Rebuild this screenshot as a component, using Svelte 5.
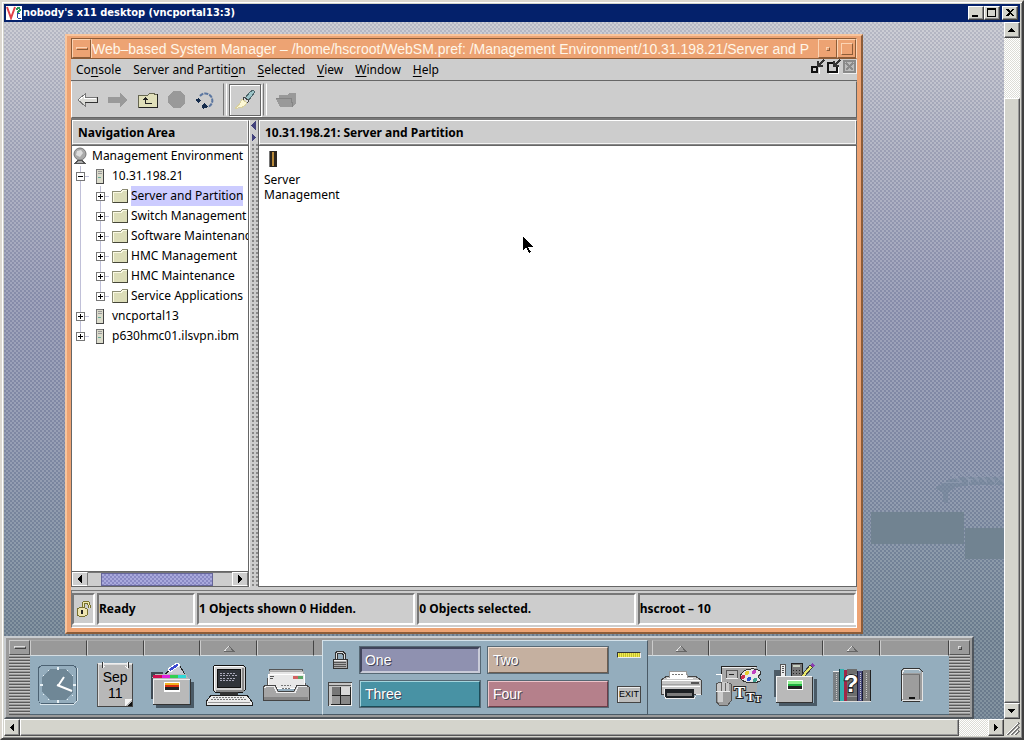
<script lang="ts">
  type TreeNode = {
    label: string;
    level: number;
    icon: "host" | "folder";
    open?: boolean;
    last?: boolean;
  };

  const menus = [
    { before: "Co", key: "n", after: "sole" },
    { before: "Server and Partiti", key: "o", after: "n" },
    { before: "", key: "S", after: "elected" },
    { before: "", key: "V", after: "iew" },
    { before: "", key: "W", after: "indow" },
    { before: "", key: "H", after: "elp" },
  ];

  const nodes: TreeNode[] = [
    { label: "10.31.198.21", level: 1, icon: "host", open: true },
    { label: "Server and Partition", level: 2, icon: "folder" },
    { label: "Switch Management", level: 2, icon: "folder" },
    { label: "Software Maintenance", level: 2, icon: "folder" },
    { label: "HMC Management", level: 2, icon: "folder" },
    { label: "HMC Maintenance", level: 2, icon: "folder" },
    { label: "Service Applications", level: 2, icon: "folder", last: true },
    { label: "vncportal13", level: 1, icon: "host" },
    { label: "p630hmc01.ilsvpn.ibm", level: 1, icon: "host", last: true },
  ];

  const leftApps = [
    { id: "clock", label: "Clock", drawer: false },
    { id: "calendar", label: "Calendar", drawer: false },
    { id: "files", label: "File Manager", drawer: false },
    { id: "terminal", label: "Terminal", drawer: true },
    { id: "mail", label: "Mail", drawer: false },
  ];

  const rightApps = [
    { id: "printer", label: "Printer", drawer: true },
    { id: "style", label: "Style Manager", drawer: false },
    { id: "apps", label: "Applications", drawer: false },
    { id: "help", label: "Help", drawer: true },
    { id: "trash", label: "Trash", drawer: false },
  ];

  const workspaces = ["One", "Two", "Three", "Four"];

  let selected = "Server and Partition";
  let workspace = "One";
</script>

{#snippet appIcon(id: string)}
  {#if id === "clock"}
    <svg width="42" height="42" viewBox="0 0 42 42">
      <rect x="1.5" y="1.5" width="38" height="38" rx="4" fill="#94adbd" stroke="#4c6273" />
      <path d="M3 40h34l3-3V4" fill="none" stroke="#dbe6ec" />
      <path d="M13 5h15l8 8v15l-8 8H13l-8-8V13z" fill="#6f8796" />
      <path d="M21 22L27 13M20 21L35 27" stroke="#fff" stroke-width="2" fill="none" shape-rendering="auto" />
      <g fill="#e8f0f4">
        <path d="M20 3h2v3h-2zM20 36h2v3h-2zM3 20h3v2H3zM36 20h3v2h-3z" />
        <path d="M11 6h1v1h-1zM30 6h1v1h-1zM6 11h1v1H6zM35 11h1v1h-1zM6 30h1v1H6zM35 31h1v1h-1zM11 35h1v1h-1zM30 35h1v1h-1z" />
      </g>
    </svg>
  {:else if id === "calendar"}
    <span class="calendar">
      <svg class="rings" width="34" height="8" viewBox="0 0 34 8"><path d="M4 0v6M30 0v6" stroke="#333" /><path d="M5 0v6l2-2M29 0v6l-2-2" stroke="#f4f4f4" fill="none" /></svg>
      <span>Sep</span>
      <span>11</span>
      <svg class="curl" width="7" height="7" viewBox="0 0 7 7"><path d="M0 7V0h7z" fill="#f4f4f4" /><path d="M2 7L7 2v5z" fill="#111" /></svg>
    </span>
  {:else if id === "files"}
    <svg width="44" height="46" viewBox="0 0 44 46">
      <path d="M1 10h12v27H1z" fill="#3f4a54" />
      <path d="M13 14L28 1l8 13z" fill="#c9ccd4" stroke="#222" />
      <path d="M18 7l9-6 3 2-10 7z" fill="#3b49cf" stroke="#fff" />
      <path d="M6 44h36V20" fill="none" stroke="#4a5a66" stroke-width="3" />
      <path d="M2 16L5 12h31l3 5v26H3V16z" fill="#b9b9b9" />
      <path d="M3 17.500h37M3.500 43V17" stroke="#eee" />
      <path d="M3 42.500h37V17" fill="none" stroke="#333" />
      <path d="M3 14.500h9" stroke="#d01050" stroke-width="3" /><path d="M12 14.500h8" stroke="#e020e0" stroke-width="3" />
      <path d="M20 14.500h8" stroke="#30d050" stroke-width="3" /><path d="M28 14.500h8" stroke="#30d8d8" stroke-width="3" />
      <rect x="14" y="20" width="16" height="10" fill="#fff" />
      <rect x="15" y="21" width="14" height="3" fill="#f0b020" /><rect x="15" y="23" width="14" height="2" fill="#d83010" /><rect x="15" y="25" width="14" height="3" fill="#222" />
    </svg>
  {:else if id === "terminal"}
    <svg width="48" height="42" viewBox="0 0 48 42">
      <path d="M8 3l2-2h28l2 2v23l-2 2H10l-2-2z" fill="#d4d4d4" stroke="#111" />
      <path d="M9 26V2h29" stroke="#fff" fill="none" />
      <path d="M38 4v23H11" stroke="#888" stroke-width="2" fill="none" />
      <rect x="12" y="5" width="23" height="18" fill="#30343a" stroke="#111" />
      <path d="M15 9h6m1 0h9M15 11h10m2 0h5M15 14h5m2 0h8M15 16h8m1 0h5" stroke="#aab" stroke-dasharray="2 1" />
      <path d="M15 28h18v3H15z" fill="#333" />
      <path d="M6 31h36l5 7v3H1v-3z" fill="#ececec" stroke="#222" />
      <path d="M8 33.500h31M6 35.500h35" stroke="#777" stroke-dasharray="2 1" /><path d="M3 38.500h42" stroke="#999" />
    </svg>
  {:else if id === "mail"}
    <svg width="48" height="34" viewBox="0 0 48 34">
      <path d="M5 15L8 1h32l3 14v5H5z" fill="#bbb" stroke="#555" />
      <path d="M7 3h34v16H7z" fill="#e6e6e6" stroke="#aaa" />
      <path d="M6 6h36v14H6z" fill="#e8e8e8" stroke="#fff" />
      <path d="M8 8.500h4M8 10.500h3" stroke="#555" /><path d="M31 8h5v3h-5z" fill="#d36262" /><path d="M36 8h5v3h-5z" fill="#5ba565" />
      <path d="M1 19l3-2h9l3 6h16l3-6h9l3 2v13H1z" fill="#a6a6a6" stroke="#444" />
      <path d="M2 19.500l3-1h7l3 6h18l3-6h9" fill="none" stroke="#eee" />
      <path d="M2 30h44" stroke="#858585" stroke-width="3" /><path d="M19 17.500h10M20 20.500h8" stroke="#777" stroke-dasharray="2 1" />
    </svg>
  {:else if id === "printer"}
    <svg width="42" height="30" viewBox="0 0 42 30">
      <path d="M1 10l6-4h28l6 4v14H1z" fill="#c6c6c6" stroke="#444" />
      <path d="M9 8V1h17l2 7z" fill="#fff" stroke="#999" /><path d="M12 4.500h12" stroke="#777" stroke-dasharray="2 1" />
      <path d="M7 8.500h26" stroke="#fff" />
      <path d="M2 10.500h38M2 16.500h38" stroke="#fff" /><path d="M2 14.500h38" stroke="#a4a4a4" /><path d="M31 13h8" stroke="#555" stroke-width="2" />
      <path d="M6 20h27v7H6z" fill="#7c7c7c" stroke="#1c2024" stroke-width="2" /><path d="M4 19v7l2 2.500h28l2-2.500" stroke="#eee" fill="none" />
      <path d="M7 22h25" stroke="#1c2024" stroke-width="2" /><path d="M36 24.500h5" stroke="#eee" />
    </svg>
  {:else if id === "style"}
    <svg class="style-art" width="48" height="42" viewBox="0 0 48 42">
      <path d="M7 2h36v26H7z" fill="#a9a9a9" /><path d="M7 28V2h36" stroke="#222" fill="none" /><path d="M8 3.500h34" stroke="#eee" />
      <rect x="12" y="6" width="11" height="8" fill="#b8b8b8" stroke="#555" /><path d="M15 10.500h5" stroke="#222" /><path d="M12 14.500h12" stroke="#eee" />
      <path d="M2 10.500h5v9" stroke="#fff" fill="none" />
      <path d="M26 13q2-9 14-8 8 1 7 5-4 2-2 4 2 1 1 3-5 3-14 1-6-2-6-5z" fill="#e8e8e8" stroke="#333" />
      <circle cx="29" cy="13" r="2" fill="#d03050" /><circle cx="33" cy="9" r="2" fill="#e8d030" /><circle cx="40" cy="8" r="2" fill="#c040c0" /><circle cx="35" cy="15" r="2" fill="#3050d0" /><circle cx="41" cy="16" r="2" fill="#40a090" />
      <path d="M2 20q7-4 15 0v17l-3 4H5l-3-4z" fill="#9d9d9d" stroke="#555" />
      <path d="M3 20q6-3 12-1v8H3z" fill="#c9c9c9" /><path d="M2 27.500h14" stroke="#eee" /><path d="M7.500 19v8M11.500 19v8" stroke="#666" /><path d="M4 28h5v10H4z" fill="#ccc" />
      <text x="20" y="34" font-size="17">T</text><text x="32" y="37" font-size="13">T</text><text x="41" y="38" font-size="9">T</text>
    </svg>
  {:else if id === "apps"}
    <svg width="44" height="46" viewBox="0 0 44 46">
      <path d="M1 8h10v27H1z" fill="#4d5c67" />
      <path d="M7 2h5v13H7z" fill="#eee" stroke="#555" /><path d="M9 4.500h2m-2 2h2m-2 2h2m-2 2h2" stroke="#555" />
      <rect x="18" y="1" width="11" height="14" fill="#777" stroke="#222" /><path d="M20 4h7" stroke="#c8d0c0" stroke-width="2" /><path d="M20 8.500h7M20 11.500h7" stroke="#222" stroke-dasharray="1 2" />
      <path d="M28 14L37 3l3 2-9 10z" fill="#e9e96a" stroke="#444" /><path d="M37 3l2-2 3 2-2 3z" fill="#8a3fb0" />
      <path d="M6 42h36V17" fill="none" stroke="#4a5a66" stroke-width="3" />
      <path d="M3 14h36v27H3z" fill="#b9b9b9" /><path d="M3 14.500h36M3.500 41V14" stroke="#f4f4f4" /><path d="M3 40.500h36V15" stroke="#333" fill="none" />
      <rect x="14" y="18" width="16" height="10" fill="#fff" /><rect x="15" y="19" width="14" height="3" fill="#90f090" /><rect x="15" y="22" width="14" height="2" fill="#20b040" /><rect x="15" y="24" width="14" height="3" fill="#222" />
    </svg>
  {:else if id === "help"}
    <svg class="help-art" width="38" height="34" viewBox="0 0 38 34">
      <rect x="0" y="3" width="6" height="30" fill="#7a8084" /><path d="M0 3.500h6" stroke="#eee" />
      <rect x="6" y="1" width="5" height="32" fill="#35b0b0" /><path d="M6.500 1v32" stroke="#163c40" />
      <rect x="11" y="2" width="3" height="31" fill="#a02848" />
      <rect x="14" y="1" width="10" height="32" fill="#6d6d6d" /><path d="M14 6.500h10M14 28.500h10" stroke="#999" />
      <rect x="24" y="3" width="5" height="30" fill="#4b4d80" /><path d="M24.500 3v30M29.500 3v30" stroke="#1a1a30" />
      <rect x="30" y="2" width="7" height="31" fill="#7c7c7c" /><path d="M37.500 2v31" stroke="#222" />
      <path d="M3.500 6v25M33.500 5v26M27.500 5v27" stroke="#ccc" stroke-dasharray="1 1" />
      <path d="M0 33.500h38" stroke="#ddd" />
      <text x="18" y="24" text-anchor="middle">?</text>
    </svg>
  {:else}
    <svg width="24" height="36" viewBox="0 0 24 36">
      <path d="M2 4l3-3h15l3 3v29l-2 1H4l-2-1z" fill="#9d9d9d" stroke="#333" />
      <path d="M3 6V4l2-2h15l2 2v2z" fill="#a0b4c0" /><path d="M3.500 32V5l2-2.500h14l2 2" fill="none" stroke="#eee" /><path d="M3 7.500h18" stroke="#777" />
      <path d="M3 33.500h20V5" stroke="#e4e4e4" fill="none" />
      <path d="M10 31h6" stroke="#111" stroke-width="2" /><path d="M20.500 8v24" stroke="#666" />
    </svg>
  {/if}
{/snippet}

{#snippet drawerRow(apps: typeof leftApps)}
  {#each apps as app}
    <div class="slot">
      <button class="drawer" aria-label="{app.label} drawer">
        {#if app.drawer}
          <svg width="12" height="7" viewBox="0 0 12 7"><path d="M1 6.500L6 1" stroke="#e4e4e4" fill="none" /><path d="M6 1l5 5.500H1" stroke="#666" fill="none" /></svg>
        {/if}
      </button>
      <button class="app" aria-label={app.label}>{@render appIcon(app.id)}</button>
    </div>
  {/each}
{/snippet}

<div class="vnc">
  <header class="vnc-title">
    <svg width="16" height="14" viewBox="0 0 16 14">
      <rect width="16" height="14" fill="#fff" />
      <path d="M1 1l4 11L9 1" stroke="#e04048" stroke-width="2" fill="none" shape-rendering="auto" />
      <path d="M10 3l3-1 1 2-3 3" stroke="#2b9a5a" stroke-width="2" fill="none" /><path d="M14 7h-3v4l1 1h3" stroke="#2848a8" stroke-width="1" fill="none" />
    </svg>
    <h1>nobody's x11 desktop (vncportal13:3)</h1>
    <button class="win-btn" aria-label="Minimize"><svg width="10" height="10"><path d="M1 7h6v2H1z" /></svg></button>
    <button class="win-btn" aria-label="Maximize"><svg width="10" height="10"><path d="M0 0h9v9H0zM1 2v6h7V2z" fill-rule="evenodd" /></svg></button>
    <button class="win-btn close" aria-label="Close"><svg width="10" height="10"><path d="M1 1h2l2 2 2-2h2L6 4.500 9 8H7L5 6 3 8H1l3-3.500z" /></svg></button>
  </header>

  <div class="view">
    <main class="desktop">
      <svg class="wallpaper" width="136" height="92" viewBox="0 0 136 92">
        <path d="M3 43h93v32H3zM97 59h39v31H97z" fill="#718391" />
        <path d="M67 19l13-8 14-3h42v8h-32l-16 2-8 6v10l-5-1v-9z" fill="#73859a" opacity=".6" />
        <path d="M84 4l10 10M91 2l12 11M100 2l11 10M108 3l11 10M116 3l11 10M124 3l12 10" stroke="#929db2" stroke-width="2" fill="none" opacity=".6" />
        <path d="M76 13h16M100 16v-6h5M112 16h6M126 16l5-5" stroke="#929db2" fill="none" opacity=".7" />
      </svg>

      <section class="window" aria-label="Web-based System Manager">
        <div class="titlebar">
          <button class="frame-btn" aria-label="Window menu"><span class="dash"></span></button>
          <h2>Web–based System Manager – /home/hscroot/WebSM.pref: /Management Environment/10.31.198.21/Server and P</h2>
          <button class="frame-btn" aria-label="Minimize window"><span class="dot"></span></button>
          <button class="frame-btn" aria-label="Maximize window"><span class="square"></span></button>
        </div>

        <div class="client">
          <nav class="menubar">
            {#each menus as menu}
              <button>{menu.before}<u>{menu.key}</u>{menu.after}</button>
            {/each}
            <div class="inner-controls">
              <button aria-label="Iconify"><svg width="15" height="15" viewBox="0 0 15 15"><path d="M2 8h5v5H2z" fill="none" stroke="#111" stroke-width="2" /><path d="M14 1L8 7M8 2v5h5" fill="none" stroke="#333" stroke-width="2" /><path d="M9 9v6H2" fill="none" stroke="#fff" /></svg></button>
              <button aria-label="Restore"><svg width="15" height="15" viewBox="0 0 15 15"><path d="M7 4H2v9h9V8" fill="none" stroke="#111" stroke-width="2" /><path d="M14 1L8 7M8 2v5h5" fill="none" stroke="#333" stroke-width="2" /><path d="M12.500 8v6.500H3" fill="none" stroke="#fff" /></svg></button>
              <button aria-label="Close view" disabled><svg width="15" height="15" viewBox="0 0 15 15"><path d="M2 2h11v11H2z" fill="#bbb" stroke="#8a8a8a" stroke-width="2" /><path d="M4 4l7 7M11 4l-7 7" stroke="#8a8a8a" stroke-width="2" /><path d="M14.500 1v13.500H1" fill="none" stroke="#eee" /></svg></button>
            </div>
          </nav>

          <div class="toolbar">
            <button aria-label="Back"><svg width="22" height="16" viewBox="0 0 22 16"><path d="M1 8l7-6v3h12v5H8v4z" fill="#dcdcd8" stroke="#777" /><path d="M8 10.500h12.500V5" stroke="#333" fill="none" /><path d="M2 8l5-4v2h12" stroke="#fff" fill="none" /></svg></button>
            <button aria-label="Forward" disabled><svg width="22" height="16" viewBox="0 0 22 16"><path d="M21 8l-8-7v4H1v6h12v4z" fill="#999" /></svg></button>
            <button aria-label="Up"><svg width="22" height="18" viewBox="0 0 22 18"><path d="M1.500 16.500v-12h9l2-2h5v1h3v13z" fill="#e0dfba" stroke="#666650" /><path d="M20.500 3v13.500h-19" stroke="#222" fill="none" /><path d="M8.500 12V7M10.500 9L8.500 7 6.500 9M8 12.500h7" stroke="#222" fill="none" /></svg></button>
            <button aria-label="Stop" disabled><svg width="20" height="20" viewBox="0 0 20 20"><path d="M6 1h7l5 5v7l-5 5H6l-5-5V6z" fill="#999" /></svg></button>
            <button aria-label="Reload"><svg width="20" height="20" viewBox="0 0 20 20"><path d="M5 6a7 7 0 1 1 8 11" stroke="#5b76a0" stroke-width="2" fill="none" stroke-dasharray="4 1" shape-rendering="auto" /><path d="M4 8l2 3-3 2-3-3zM9 13l4 4-5 2-1-3z" fill="#152c4c" /></svg></button>
            <span class="divider"></span>
            <button class="toggled" aria-label="Highlight" aria-pressed="true"><svg width="24" height="24" viewBox="0 0 24 24"><path d="M17 4l3-2 2 2-6 8-4-2z" fill="#9cc4c8" stroke="#4c656a" /><path d="M11 9l5 4-2 2-4-4z" fill="#ddd" stroke="#444" /><path d="M9 11l5 4q-4 6-12 5 5-3 7-9z" fill="#fdf8d6" stroke="#d8d0a0" /></svg></button>
            <span class="divider"></span>
            <button class="open-folder" aria-label="Open" disabled><svg width="22" height="18" viewBox="0 0 22 18"><path d="M4 4h8l2-2h6l1 1v9l-3 4H5L1 8h3z" fill="#999" /><path d="M1 7.500h15l2 8" stroke="#858585" fill="none" /></svg></button>
          </div>

          <div class="panes">
            <aside class="nav-pane">
              <h3>Navigation Area</h3>
              <div class="tree">
                <button class="row">
                  <svg width="20" height="20" viewBox="0 0 20 20"><g shape-rendering="auto"><circle cx="8" cy="8" r="6" fill="#aaa" stroke="#777" /><path d="M5 5l4-1 2 3-3 4-4-2z" fill="#ddd" /></g><path d="M3 17.500h10l-3-3H6z" fill="#aaa" stroke="#555" /></svg>
                  <span>Management Environment</span>
                </button>
                {#each nodes as node}
                  <div class="row">
                    {#if node.level === 2}
                      <svg class="guide" width="18" height="20"><path d="M8.500 0v20" stroke="#c0c0d8" /></svg>
                    {/if}
                    <button class="expander" aria-label="Toggle {node.label}" aria-expanded={!!node.open}>
                      <svg width={node.level === 1 ? 22 : 20} height="20" viewBox="{node.level === 1 ? 0 : -2} 0 {node.level === 1 ? 22 : 20} 20">
                        <path d={node.last ? "M8.500 0v10h8" : "M8.500 0v20M8.500 10.500h8"} stroke="#c0c0d8" fill="none" />
                        <rect x="4.500" y="6.500" width="8" height="8" fill="#fff" stroke="#777" />
                        <path d={node.open ? "M6 10.500h5" : "M6 10.500h5M8.500 8v5"} stroke="#000" />
                      </svg>
                    </button>
                    <button class="node" class:selected={selected === node.label} on:click={() => (selected = node.label)}>
                      {#if node.icon === "host"}
                        <svg width="18" height="20" viewBox="0 0 18 20"><path d="M2 3h7v14H2z" fill="#dcdccc" stroke="#777" /><path d="M9.500 3v14.500H2" stroke="#444" fill="none" /><path d="M4 5.500h4M4 7.500h4" stroke="#999" /><path d="M4 11.500h3" stroke="#6a9" /></svg>
                      {:else}
                        <svg width="21" height="20" viewBox="0 0 21 20"><path d="M2.500 16.500v-11h8l2-2h5v13z" fill="#dcddb8" stroke="#8c8c74" /><path d="M3.500 16V6.500H11l2-2h4" stroke="#fafae4" fill="none" /><path d="M17.500 4v12.500h-15" stroke="#444438" fill="none" /></svg>
                      {/if}
                      <span>{node.label}</span>
                    </button>
                  </div>
                {/each}
              </div>
              <div class="nav-scroll">
                <button aria-label="Scroll left"><svg width="6" height="8"><path d="M5 0v8L0 4z" /></svg></button>
                <div class="nav-track"><span class="nav-thumb"></span></div>
                <button aria-label="Scroll right"><svg width="6" height="8"><path d="M1 0v8l5-4z" /></svg></button>
              </div>
            </aside>

            <div class="splitter">
              <svg width="8" height="22" viewBox="0 0 8 22"><path d="M6 1v9L1 5.500zM2 13v9l4-4.500z" fill="#42427c" /></svg>
            </div>

            <section class="content-pane">
              <h3>10.31.198.21: Server and Partition</h3>
              <div class="objects">
                <button class="object">
                  <svg width="16" height="16" viewBox="0 0 16 16"><rect x="5" y="0" width="8" height="16" fill="#2c2620" /><path d="M9 1v14" stroke="#b98a3a" stroke-width="2" /><path d="M5.500 0v16" stroke="#777" /></svg>
                  <span>Server</span>
                  <span>Management</span>
                </button>
                <svg class="cursor" width="12" height="18" viewBox="0 0 12 18"><path d="M1 1v13l3-3 3 6 2-1-3-5h5z" /></svg>
              </div>
            </section>
          </div>

          <footer class="status">
            <div class="cell lock">
              <svg width="17" height="18" viewBox="0 0 17 18" shape-rendering="auto"><path d="M8 8V4q0-2 3-2t3 3v3" stroke="#77702e" stroke-width="3" fill="none" /><path d="M8 8V4q0-2 3-2t3 3v3" stroke="#f0e8a8" fill="none" /><path d="M2 9q5-3 10 0v6q-5 3-10 0z" fill="#eee4b0" stroke="#77702e" /><path d="M7 10v4" stroke="#222" stroke-width="2" /></svg>
            </div>
            <div class="cell ready">Ready</div>
            <div class="cell">1 Objects shown 0 Hidden.</div>
            <div class="cell">0 Objects selected.</div>
            <div class="cell">hscroot – 10</div>
          </footer>
        </div>
      </section>

      <section class="front-panel" aria-label="Front panel">
        <div class="handle"><button aria-label="Panel menu"><span class="dash"></span></button></div>
        <div class="apps left">{@render drawerRow(leftApps)}<span class="stub"></span></div>

        <div class="switch">
          <button aria-label="Lock display"><svg width="18" height="20" viewBox="0 0 18 20"><path d="M5 9V4l2-2h4l2 2v5" stroke="#333" stroke-width="3" fill="none" /><path d="M5 9V4l2-2h4l2 2v5" stroke="#ddd" fill="none" /><rect x="2" y="9" width="14" height="9" fill="#aaa" stroke="#333" /><path d="M3 10.500h12" stroke="#eee" /><path d="M3 12.500h12M3 14.500h12M3 16.500h12" stroke="#555" /></svg></button>
          <div class="workspaces">
            {#each workspaces as name}
              <button class={name.toLowerCase()} class:current={workspace === name} on:click={() => (workspace = name)}>{name}</button>
            {/each}
          </div>
          <span class="busy"></span>
          <button aria-label="Graphical workspace manager"><svg width="24" height="24" viewBox="0 0 24 24"><rect width="24" height="24" fill="#c4c4c4" /><path d="M0 24V.5h24" stroke="#444" fill="none" /><path d="M1 3.500h22" stroke="#555" /><rect x="4" y="5" width="8" height="8" fill="#777" /><rect x="12" y="5" width="10" height="8" fill="#d8d8d8" /><rect x="4" y="14" width="8" height="8" fill="#999" /><rect x="13" y="14" width="9" height="8" fill="#888" /><path d="M4 13.500h18M12.500 5v17M3 22.500h19.500V5" stroke="#222" fill="none" /><path d="M1 23.500h22.500V1" stroke="#eee" fill="none" /></svg></button>
          <button class="exit">EXIT</button>
        </div>

        <div class="apps right"><span class="gap"></span>{@render drawerRow(rightApps)}</div>
        <div class="handle"><button aria-label="Minimize panel"><span class="dot"></span></button></div>
      </section>
    </main>

    <div class="vscroll">
      <button aria-label="Scroll up"><svg width="8" height="4"><path d="M0 4h7L3.500 0z" /></svg></button>
      <div class="track"><span class="thumb"></span></div>
      <button aria-label="Scroll down"><svg width="8" height="4"><path d="M0 0h7L3.500 4z" /></svg></button>
    </div>
    <div class="hscroll">
      <button aria-label="Scroll left"><svg width="4" height="8"><path d="M4 0v7L0 3.500z" /></svg></button>
      <div class="track"><span class="thumb"></span></div>
      <button aria-label="Scroll right"><svg width="4" height="8"><path d="M0 0v7l4-3.500z" /></svg></button>
    </div>
    <div class="grip"><svg width="14" height="14"><path d="M13 1L1 13M13 5L5 13M13 9L9 13" stroke="#777" stroke-width="2" /><path d="M12 1L0 13M12 5L4 13M12 9L8 13" stroke="#fff" /></svg></div>
  </div>
</div>

<style>
  :global(body) {
    margin: 0;
    background: #d4d4cc;
  }

  * {
    box-sizing: border-box;
  }

  svg {
    display: block;
    flex: none;
    shape-rendering: crispEdges;
  }

  button {
    margin: 0;
    padding: 0;
    border: 0;
    border-radius: 0;
    background: none;
    color: inherit;
    font: inherit;
  }

  h1,
  h2,
  h3 {
    margin: 0;
    white-space: nowrap;
  }

  .vnc {
    display: flex;
    flex-direction: column;
    height: 100vh;
    min-height: 480px;
    padding: 2px;
    border: 2px solid;
    border-color: #dcd8d0 #404040 #404040 #dcd8d0;
    background: #d4d4cc;
    box-shadow: inset 1px 1px 0 #fff, inset -1px -1px 0 #888;
    font-family: "Noto Sans", sans-serif;
    font-size: 12px;
    color: #000;
  }

  .vnc-title {
    display: flex;
    align-items: center;
    height: 18px;
    padding: 0 2px;
    background: #04216b;
    color: #fff;
  }

  .vnc-title h1 {
    flex: 1;
    padding-left: 1px;
    font-family: "DejaVu Sans Condensed", "DejaVu Sans", sans-serif;
    font-size: 11px;
    line-height: 18px;
  }

  .win-btn,
  .vscroll button,
  .hscroll button {
    display: grid;
    place-items: center;
    border: 1px solid;
    border-color: #fff #404040 #404040 #fff;
    background: #d4d4cc;
    box-shadow: inset -1px -1px 0 #888;
  }

  .win-btn {
    width: 16px;
    height: 14px;
  }

  .win-btn.close {
    margin-left: 2px;
  }

  .view {
    display: grid;
    flex: 1;
    grid-template-columns: minmax(0, 1fr) 16px;
    grid-template-rows: minmax(0, 1fr) 17px;
    min-height: 0;
  }

  .desktop {
    position: relative;
    display: flex;
    flex-direction: column;
    padding-top: 12px;
    overflow: hidden;
    background:
      repeating-conic-gradient(rgb(255 255 255 / 0.14) 0 25%, rgb(70 80 120 / 0.12) 0 50%) 0 0 / 4px 4px,
      linear-gradient(#c6c7cf 0, #a8abbd 18%, #8f94b0 40%, #868fa9 60%, #7a8a9d 76%, #6f8190 88%, #6f8190 100%);
  }

  .wallpaper {
    position: absolute;
    right: 0;
    bottom: 158px;
  }

  .window {
    position: relative;
    display: flex;
    flex: 1;
    flex-direction: column;
    min-height: 0;
    margin: 0 141px 2px 61px;
    padding: 2px 4px 4px;
    border: 2px solid;
    border-color: #f8c49c #8c5c38 #8c5c38 #f8c49c;
    background: #eda373;
  }

  .titlebar {
    display: flex;
    height: 21px;
    border: 1px solid;
    border-color: #8c5c38 #fcd4b4 #8c5c38 #8c5c38;
    color: #fff6e8;
  }

  .titlebar h2 {
    flex: 1;
    min-width: 0;
    overflow: hidden;
    border-left: 1px solid #fcd4b4;
    font-family: "Liberation Sans", sans-serif;
    font-size: 14px;
    font-weight: 400;
    line-height: 20px;
  }

  .frame-btn {
    display: grid;
    place-items: center;
    width: 19px;
    border: 1px solid;
    border-color: #fcd4b4 #8c5c38 #8c5c38 #fcd4b4;
  }

  .dash {
    width: 12px;
    height: 3px;
    border: 1px solid;
    border-color: #fcd4b4 #8c5c38 #8c5c38 #fcd4b4;
  }

  .dot {
    width: 4px;
    height: 4px;
    border: 1px solid;
    border-color: #fcd4b4 #8c5c38 #8c5c38 #fcd4b4;
  }

  .square {
    width: 12px;
    height: 12px;
    border: 1px solid;
    border-color: #fcd4b4 #8c5c38 #8c5c38 #fcd4b4;
  }

  .client {
    display: flex;
    flex: 1;
    flex-direction: column;
    min-height: 0;
    background: #cdcdcd;
  }

  .menubar {
    display: flex;
    gap: 12px;
    height: 22px;
    padding-left: 5px;
    border-bottom: 1px solid #666;
    line-height: 21px;
  }

  .menubar u {
    text-underline-offset: 2px;
  }

  .inner-controls {
    display: flex;
    align-items: flex-start;
    gap: 1px;
    margin-left: auto;
  }

  .toolbar {
    display: flex;
    align-items: center;
    gap: 8px;
    height: 37px;
    padding: 0 5px;
    border: 1px solid;
    border-color: #cdcdcd #666 #666 #fff;
  }

  .toolbar .divider {
    align-self: stretch;
    width: 4px;
    margin: 1px 0;
    border: 1px solid;
    border-color: transparent #fff transparent #777;
    background: #cdcdcd;
  }

  .toolbar .toggled {
    display: grid;
    place-items: center;
    width: 32px;
    height: 32px;
    margin: 0 -6px;
    border: 1px solid #666;
    box-shadow: inset 1px 1px 0 #fff, 1px 1px 0 #fff;
  }

  .panes {
    display: flex;
    flex: 1;
    min-height: 0;
    border-top: 2px solid #777;
  }

  .nav-pane {
    display: flex;
    flex: none;
    flex-direction: column;
    width: 178px;
    border-left: 1px solid #666;
  }

  h3 {
    flex: none;
    height: 25px;
    padding-left: 5px;
    border: 1px solid;
    border-color: #fff #666 #888 #fff;
    box-shadow: inset -1px -1px 0 #f4f4f4;
    font-size: 12px;
    line-height: 23px;
  }

  .tree {
    flex: 1;
    overflow: hidden;
    border: 1px solid #666;
    border-left: 0;
    background: #fff;
  }

  .row {
    display: flex;
    height: 20px;
    line-height: 20px;
    white-space: nowrap;
  }

  .node {
    display: flex;
  }

  .node.selected span {
    background: #ccccff;
  }

  .nav-scroll {
    display: flex;
    height: 15px;
    border-right: 1px solid #666;
    border-bottom: 1px solid #666;
  }

  .nav-scroll button {
    display: grid;
    place-items: center;
    width: 16px;
    border: 1px solid;
    border-color: #fff #777 #fff #fff;
  }

  .nav-track {
    display: flex;
    flex: 1;
    border-top: 1px solid #777;
  }

  .nav-thumb {
    width: 78%;
    margin-left: 9%;
    border: 1px solid #666699;
    background: repeating-conic-gradient(#8a8ac4 0 25%, #a9a9dc 0 50%) 0 0 / 4px 4px;
  }

  .splitter {
    flex: none;
    width: 9px;
    border-left: 1px solid #fff;
    background:
      conic-gradient(#888 25%, transparent 0) 0 0 / 4px 4px,
      #cdcdcd;
  }

  .splitter svg {
    background: #cdcdcd;
  }

  .content-pane {
    display: flex;
    flex: 1;
    flex-direction: column;
    min-width: 0;
    border-left: 1px solid #666;
  }

  .objects {
    position: relative;
    flex: 1;
    border: 1px solid #666;
    border-left: 0;
    background: #fff;
  }

  .object {
    display: flex;
    flex-direction: column;
    align-items: flex-start;
    padding: 5px;
    line-height: 15px;
  }

  .object svg {
    margin-bottom: 5px;
  }

  .cursor {
    position: absolute;
    top: 90px;
    left: 263px;
  }

  .status {
    display: flex;
    gap: 2px;
    height: 38px;
    margin-top: 3px;
    padding: 2px 0;
    border: 1px solid;
    border-color: #777 #fff #fff #777;
    font-weight: 700;
  }

  .cell {
    flex: 1;
    border: 2px solid;
    border-color: #777 #fff #fff #777;
    line-height: 28px;
    white-space: nowrap;
  }

  .cell.lock {
    display: grid;
    flex: none;
    width: 23px;
    place-items: center;
  }

  .cell.ready {
    flex: none;
    width: 98px;
  }

  .front-panel {
    position: relative;
    display: flex;
    flex: none;
    height: 83px;
    margin-right: 30px;
    padding: 2px 2px 2px 3px;
    border: 2px solid;
    border-color: #c8ccd0 #50565c #50565c #c8ccd0;
    background: #9a9a9a;
  }

  .handle {
    display: flex;
    flex: none;
    flex-direction: column;
    width: 21px;
    background: repeating-linear-gradient(#c4c4c4 0 1px, #999 1px 2px, #5a5a5a 2px 3px);
  }

  .handle button {
    display: grid;
    place-items: center;
    height: 15px;
    border: 1px solid;
    border-color: #ccc #555 #555 #ccc;
    background: #9a9a9a;
  }

  .handle .dash,
  .handle .dot {
    border-color: #ddd #444 #444 #ddd;
  }

  .apps {
    display: flex;
    min-width: 0;
    border-bottom: 1px solid #506472;
    background: #94adbd;
  }

  .apps.left {
    flex: 97;
  }

  .apps.right {
    flex: 100;
  }

  .slot {
    display: flex;
    flex: 1;
    flex-direction: column;
    min-width: 0;
  }

  .apps.right .slot:last-child {
    flex: 1.2;
  }

  .apps.right .slot:last-child .app {
    padding-right: 8px;
  }

  .drawer {
    display: grid;
    place-items: center;
    height: 16px;
    border: 1px solid;
    border-color: #aaa #444 #d4dde2 #ccc;
    background: #999;
  }

  .stub,
  .gap {
    width: 8px;
    height: 16px;
    border-bottom: 1px solid #d4dde2;
    background: #999;
  }

  .gap {
    width: 4px;
  }

  .app {
    display: grid;
    flex: 1;
    place-items: center;
  }

  .calendar {
    position: relative;
    width: 36px;
    height: 44px;
    padding-top: 5px;
    border: 1px solid;
    border-color: #eee #444 #444 #555;
    background: #b8b8b8;
    box-shadow: inset 1px 1px 0 #ddd;
    font-family: "Liberation Sans", sans-serif;
    font-size: 14px;
    line-height: 16px;
    text-align: center;
  }

  .calendar span {
    display: block;
  }

  .rings {
    position: absolute;
    top: -2px;
    left: 0;
  }

  .curl {
    position: absolute;
    right: 0;
    bottom: 0;
  }

  .style-art text,
  .help-art text {
    fill: #fff;
    stroke: #222;
    stroke-width: 2px;
    paint-order: stroke;
    font-family: "Liberation Serif", serif;
    font-weight: 700;
  }

  .help-art text {
    font-family: "Liberation Sans", sans-serif;
    font-size: 24px;
  }

  .switch {
    display: grid;
    flex: none;
    grid-template-columns: 24px 250px 26px;
    grid-template-rows: 28px 28px;
    gap: 6px 7px;
    align-items: center;
    justify-items: center;
    padding: 5px;
    border: 1px solid;
    border-color: #d4e2ea #4a5a66 #4a5a66 #d4e2ea;
    background: #94adbd;
  }

  .workspaces {
    display: grid;
    grid-row: span 2;
    grid-template-columns: 1fr 1fr;
    gap: 6px;
    width: 100%;
  }

  .workspaces button {
    height: 28px;
    padding-left: 4px;
    border: 2px solid;
    outline: 1px solid #566874;
    outline-offset: -1px;
    color: #fff;
    font-family: "Liberation Sans", sans-serif;
    font-size: 14px;
    line-height: 22px;
    text-align: left;
    text-shadow: 1px 1px 0 #445;
  }

  .workspaces .one {
    border-color: #c9cbe0 #4c4e68 #4c4e68 #c9cbe0;
    background: #8f91b0;
  }

  .workspaces .two {
    border-color: #f0e0d4 #6b5c50 #6b5c50 #f0e0d4;
    background: #c5b0a0;
  }

  .workspaces .three {
    border-color: #a4d4dc #1d4c58 #1d4c58 #a4d4dc;
    background: #4892a4;
  }

  .workspaces .four {
    border-color: #ecc4ca #6b3c48 #6b3c48 #ecc4ca;
    background: #b5808b;
  }

  .workspaces .current {
    padding-left: 3px;
    border-width: 3px;
    border-color: #40445a #c9cbd8 #c9cbd8 #40445a;
  }

  .busy {
    align-self: start;
    width: 24px;
    height: 6px;
    margin-top: 6px;
    border: 1px solid;
    border-color: #333 #eee #eee #333;
    background: repeating-linear-gradient(90deg, #f0ec50 0 1px, #c8c030 1px 2px);
  }

  .exit {
    width: 24px;
    height: 17px;
    border: 1px solid #444;
    background: #bdbdbd;
    box-shadow: inset 1px 1px 0 #eee;
    font-family: "Liberation Sans", sans-serif;
    font-size: 9px;
    line-height: 14px;
  }

  .vscroll,
  .hscroll {
    display: flex;
    min-width: 0;
    min-height: 0;
  }

  .vscroll {
    flex-direction: column;
  }

  .vscroll button {
    height: 16px;
  }

  .hscroll button {
    width: 16px;
  }

  .track {
    display: flex;
    flex: 1;
    min-width: 0;
    min-height: 0;
    background: repeating-conic-gradient(#fff 0 25%, #dcdcd6 0 50%) 0 0 / 2px 2px;
  }

  .vscroll .track {
    align-items: flex-end;
  }

  .thumb {
    border: 1px solid;
    border-color: #fff #555 #555 #fff;
    background: #d4d4cc;
    box-shadow: inset -1px -1px 0 #999;
  }

  .vscroll .thumb {
    width: 100%;
    height: 91%;
  }

  .hscroll .thumb {
    width: 97%;
  }

  .grip {
    display: grid;
    place-items: end;
  }
</style>
